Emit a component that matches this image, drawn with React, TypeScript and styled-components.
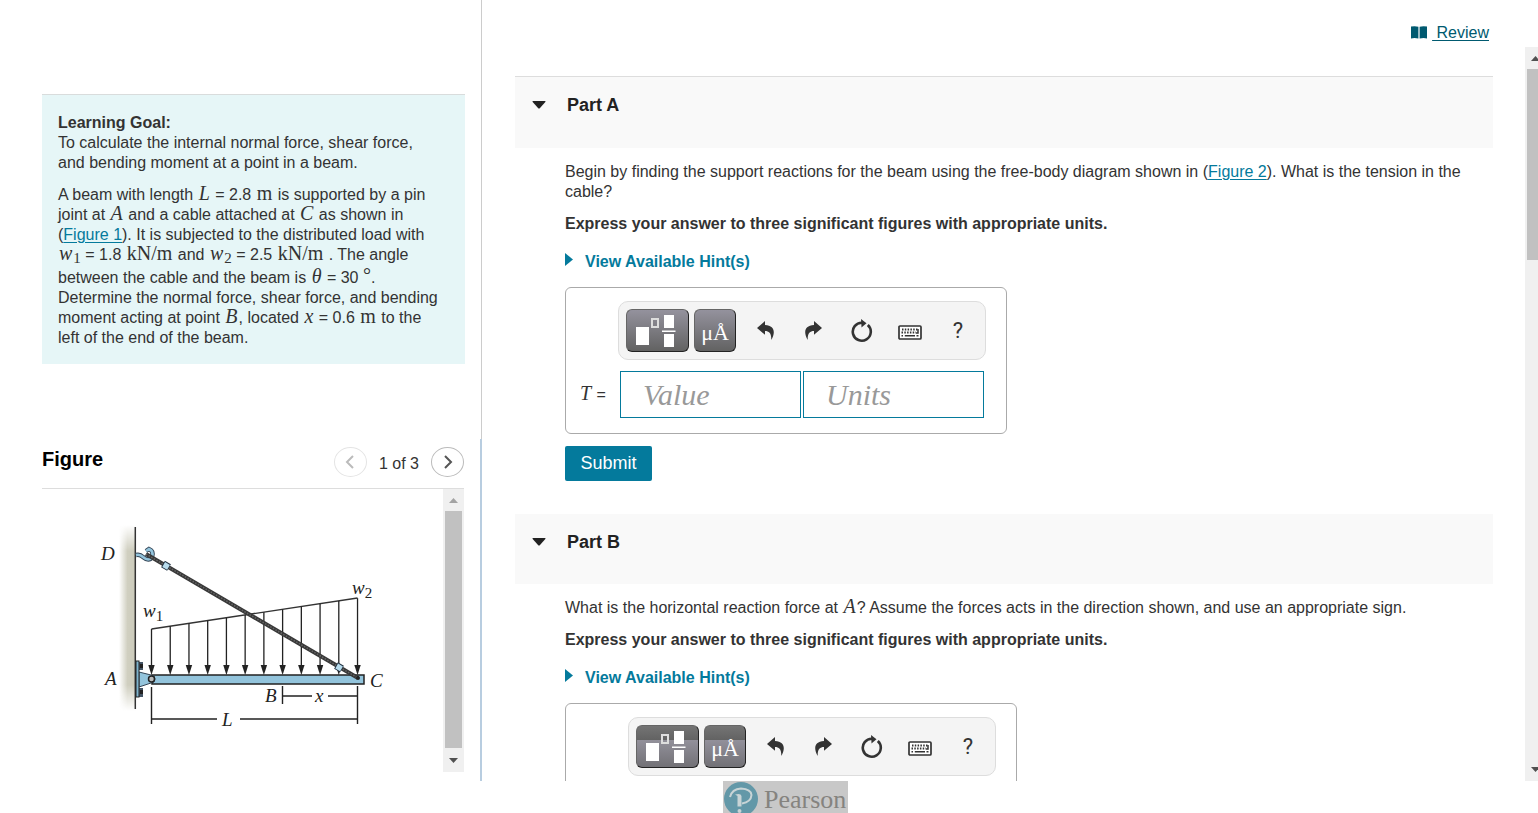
import React, { useId } from "react";
import styled, { createGlobalStyle } from "styled-components";

const GlobalStyle = createGlobalStyle`
  * { box-sizing: border-box; }
  body {
    margin: 0;
    background: #fff;
    color: #333;
    font-family: "Liberation Sans", Arial, sans-serif;
    font-size: 16px;
    line-height: 20px;
  }
  button, input { font-family: inherit; }
`;

const serif = '"Liberation Serif", "Times New Roman", serif';

const Page = styled.div`
  display: grid;
  grid-template-rows: minmax(0, 1fr) 32px;
  height: 100vh;
  overflow: hidden;
`;

const Panes = styled.div`
  display: grid;
  grid-template-columns: 482px minmax(0, 1fr);
  min-height: 0;
`;

const LeftPane = styled.aside`
  display: flex;
  flex-direction: column;
  min-height: 0;
`;

const GoalArea = styled.section`
  flex: none;
  padding: 94px 16px 75px 42px;
  border-right: 1px solid #ccc;
`;

const GoalCard = styled.div`
  padding: 18px 22px 16px 16px;
  border-top: 1px solid #d9dcdc;
  background: #e6f6f7;
  color: #333;
  font-size: 16px;
`;

const Para = styled.p`
  margin: 0 0 12px;
  &:last-child { margin-bottom: 0; }
`;

const Var = styled.i`
  padding: 0 1px;
  font-family: ${serif};
  font-size: 20px;
  line-height: 16px;
`;

const Unit = styled.span`
  padding: 0 1px;
  font-family: ${serif};
  font-size: 20px;
  line-height: 16px;
`;

const Degree = styled.span`
  font-family: ${serif};
  font-size: 20px;
  line-height: 20px;
  vertical-align: 1px;
`;

const Sub = styled.sub`
  font-family: ${serif};
  font-size: 15px;
  font-style: normal;
  line-height: 0;
  vertical-align: -3px;
`;

const TextLink = styled.a`
  color: #047a9c;
  text-decoration: underline;
  text-underline-offset: 2px;
`;

const FigureArea = styled.section`
  display: flex;
  flex: 1;
  flex-direction: column;
  min-height: 0;
  padding: 0 16px 9px 42px;
  border-right: 2px solid #b8cde0;
`;

const FigureHeader = styled.header`
  display: flex;
  flex: none;
  align-items: center;
  justify-content: space-between;
  height: 50px;
  padding-bottom: 4px;
  border-bottom: 1px solid #ddd;
`;

const FigureTitle = styled.h2`
  margin: 0;
  padding-bottom: 6px;
  color: #000;
  font-size: 20px;
`;

const Pager = styled.div`
  display: flex;
  align-items: center;
  gap: 12px;
  color: #333;
`;

const PageCount = styled.span`
  padding-top: 4px;
`;

const PagerButton = styled.button`
  display: grid;
  place-items: center;
  width: 33px;
  height: 30px;
  padding: 0;
  border: 1px solid #bbb;
  border-radius: 50%;
  background: #fff;
  color: #555;
  &:disabled { border-color: #e4e4e4; color: #bbb; }
`;

const FigureBody = styled.div`
  display: flex;
  flex: 1;
  justify-content: space-between;
  min-height: 0;
`;

const Thumb = styled.div<{ $size: string }>`
  align-self: stretch;
  flex: ${(p) => p.$size};
  margin: 0 2px;
  background: #c1c1c1;
`;

const Track = styled.div<{ $clipped?: boolean }>`
  display: flex;
  flex: none;
  flex-direction: column;
  align-items: flex-start;
  width: ${(p) => (p.$clipped ? 13 : 21)}px;
  overflow: hidden;
  background: #f0f0f0;
  ${Thumb} { margin-right: ${(p) => (p.$clipped ? 0 : 2)}px; }
`;

const ArrowCell = styled.div<{ $end?: boolean }>`
  display: grid;
  flex: none;
  place-items: center;
  width: 21px;
  height: ${(p) => (p.$end ? 24 : 22)}px;
  margin-top: ${(p) => (p.$end ? "auto" : "0")};
`;

const RightPane = styled.main`
  display: flex;
  flex-direction: column;
  min-width: 0;
  min-height: 0;
`;

const TopBar = styled.nav`
  display: flex;
  flex: none;
  align-items: center;
  justify-content: flex-end;
  height: 47px;
  padding: 18px 49px 0 0;
`;

const ReviewLink = styled.a`
  display: flex;
  align-items: center;
  gap: 5px;
  color: #005a70;
  text-decoration: none;
  span { text-decoration: underline; text-underline-offset: 2px; white-space: pre; }
`;

const ScrollArea = styled.div`
  display: flex;
  flex: 1;
  min-height: 0;
`;

const Content = styled.div`
  flex: 1;
  min-width: 0;
  overflow: hidden;
  padding: 29px 32px 0 33px;
`;

const Part = styled.section`
  margin-bottom: 33px;
`;

const PartHeader = styled.h2<{ $first?: boolean }>`
  height: ${(p) => (p.$first ? 72 : 70)}px;
  margin: 0;
  border-top: ${(p) => (p.$first ? "1px solid #ddd" : "0")};
  background: #f9f9f9;
`;

const PartToggle = styled.button`
  display: flex;
  align-items: center;
  gap: 21px;
  padding: 18px 17px;
  border: 0;
  background: none;
  color: #222;
  font-size: 18px;
  font-weight: bold;
  line-height: 20px;
`;

const PartBody = styled.div`
  padding: 14px 0 0 50px;
  color: #333;
`;

const Instruction = styled.p`
  margin: 0 0 18px;
  font-weight: bold;
`;

const HintButton = styled.button`
  display: flex;
  align-items: center;
  gap: 12px;
  margin: 0 0 15px;
  padding: 0;
  border: 0;
  background: none;
  color: #047a9c;
  font-size: 16px;
  font-weight: bold;
  line-height: 20px;
  svg { margin-bottom: 5px; }
`;

const AnswerBox = styled.form<{ $wide?: boolean }>`
  width: ${(p) => (p.$wide ? 452 : 442)}px;
  padding: 13px 20px 15px 13px;
  border: 1px solid #aaa;
  border-radius: 6px;
`;

const Toolbar = styled.div`
  display: flex;
  align-items: center;
  width: 368px;
  height: 59px;
  margin-left: auto;
  padding: 0 3px 0 7px;
  border: 1px solid #ddd;
  border-radius: 10px;
  background: #f4f4f4;
`;

const ToolKey = styled.button<{ $split?: boolean; $width: number }>`
  display: grid;
  flex: none;
  place-items: center;
  width: ${(p) => p.$width}px;
  height: 43px;
  margin-right: 5px;
  padding: 0;
  border: 1px solid #222;
  border-top-color: #666;
  border-left-color: #666;
  border-radius: 6px;
  background: ${(p) =>
    p.$split
      ? "linear-gradient(#747474, #626262 35%, #92909a 35%, #727176)"
      : "linear-gradient(#94929d, #626262)"};
  color: #fff;
  font-family: ${serif};
  font-size: 22px;
  line-height: 24px;
  span { padding-top: 4px; }
`;

const ToolButton = styled.button`
  display: grid;
  flex: 1;
  place-items: center;
  height: 43px;
  padding: 0;
  border: 0;
  background: none;
  color: #333;
  font-family: Roboto, "Liberation Sans", sans-serif;
  font-size: 22px;
`;

const AnswerRow = styled.div`
  display: flex;
  align-items: center;
  gap: 2px;
  margin-top: 11px;
  padding-right: 2px;
`;

const AnswerLabel = styled.label`
  flex: 1;
`;

const AnswerInput = styled.input`
  width: 181px;
  height: 47px;
  padding: 0 22px;
  border: 1px solid #047a9c;
  background: #fff;
  font-family: ${serif};
  font-size: 30px;
  font-style: italic;
  &::placeholder { color: #999; opacity: 1; }
`;

const SubmitButton = styled.button`
  width: 87px;
  height: 35px;
  margin-top: 12px;
  padding: 0;
  border: 0;
  border-radius: 2px;
  background: #047a9c;
  color: #fff;
  font-size: 18px;
`;

const Footer = styled.footer`
  display: flex;
  justify-content: center;
  padding-left: 33px;
  overflow: hidden;
`;

const Brand = styled.div`
  display: flex;
  gap: 6px;
  width: 125px;
  height: 36px;
  background: #c8c8c8;
  color: #85837f;
  font-family: ${serif};
  font-size: 26px;
  line-height: 38px;
  svg { flex: none; }
`;

const Triangle = ({ up, color }: { up?: boolean; color: string }) => (
  <svg width="9" height="5" viewBox="0 0 9 5">
    <path d={up ? "M0 5 4.500 0 9 5Z" : "M0 0H9L4.500 5Z"} fill={color} />
  </svg>
);

const TemplateIcon = () => (
  <svg width="43" height="34" viewBox="0 0 43 34">
    <path d="M0 13H13V31H0ZM28 1H38V14H28ZM28 20H38V33H28ZM26 16.500H39.500V18H26Z" fill="#fff" />
    <rect x="16" y="5" width="6" height="8" fill="none" stroke="#ddd" strokeWidth="2" />
  </svg>
);

const UndoIcon = ({ flip }: { flip?: boolean }) => (
  <svg width="18" height="20" viewBox="0 0 18 20">
    <path
      d="M9 0 1 7 9 13.800V10C13 10 15.500 12 15.300 19 19.500 12 19 4.500 9 4Z"
      fill="#333"
      transform={flip ? "matrix(-1 0 0 1 19 0)" : undefined}
    />
  </svg>
);

const ResetIcon = () => (
  <svg width="22" height="24" viewBox="0 0 22 24">
    <path d="M16.800 6A9 9 0 1 1 11 3.700" fill="none" stroke="#333" strokeWidth="2.600" />
    <path d="M10 0 15.500 4.200 10.500 8.500Z" fill="#333" />
  </svg>
);

const KeyboardIcon = () => (
  <svg width="24" height="19" viewBox="0 -4 24 19">
    <rect x="1" y="1" width="22" height="13" rx="1" fill="#fff" stroke="#333" strokeWidth="1.700" />
    <path d="M4 4.500H20M3.500 7.500H18" stroke="#333" strokeWidth="1.800" strokeDasharray="1.500 1.300" />
    <path d="M3.500 10.800H5M6.800 10.800H17M18.500 10.800H20.500M20 4V8H18" fill="none" stroke="#333" strokeWidth="1.500" />
  </svg>
);

const Chevron = ({ left }: { left?: boolean }) => (
  <svg width="10" height="14" viewBox="0 0 10 14">
    <path d={left ? "M8 1 2 7 8 13" : "M2 1 8 7 2 13"} fill="none" stroke="currentColor" strokeWidth="2" />
  </svg>
);

const BookIcon = () => (
  <svg width="16" height="13" viewBox="0 0 16 13">
    <path d="M0 .6Q4 -.4 7.400 .8V12.600Q4 11.600 0 12.400ZM8.600 .8Q12 -.4 16 .6V12.400Q12 11.600 8.600 12.600Z" fill="#005a70" />
  </svg>
);

const FigureSvg = styled.svg`
  flex: none;
  font-family: ${serif};
  font-size: 19px;
  font-style: italic;
`;

const arrows = Array.from({ length: 12 }, (_, i) => ({
  x: 151.5 + i * 18.73,
  top: 628 - i * 2.8,
}));

const BeamFigure = () => (
  <FigureSvg width="400" height="283" viewBox="42 488 400 283" role="img" aria-label="Cable-supported beam">
    <defs>
      <linearGradient id="wall">
        <stop offset="0" stopColor="#d0cfc0" stopOpacity="0" />
        <stop offset=".5" stopColor="#d0cfc0" />
        <stop offset="1" stopColor="#cccbbb" />
      </linearGradient>
      <linearGradient id="fade" x2="0" y2="1">
        <stop offset="0" stopColor="#000" />
        <stop offset=".14" stopColor="#fff" />
        <stop offset=".86" stopColor="#fff" />
        <stop offset="1" stopColor="#000" />
      </linearGradient>
      <mask id="wallMask">
        <rect x="119" y="524" width="17" height="186" fill="url(#fade)" />
      </mask>
    </defs>
    <rect x="119" y="524" width="17" height="186" fill="url(#wall)" mask="url(#wallMask)" />
    <path d="M135.300 526V708" stroke="#333" strokeWidth="1.500" />

    <path d="M151.500 628 357.500 597" stroke="#333" strokeWidth="1.300" />
    {arrows.map((a) => (
      <g key={a.x}>
        <path d={`M${a.x} ${a.top}V668`} stroke="#222" strokeWidth="1.300" />
        <path d={`M${a.x - 3.2} 664H${a.x + 3.2}L${a.x} 674Z`} fill="#222" />
      </g>
    ))}

    <rect x="152" y="674" width="212" height="9" fill="#93c4dc" stroke="#222" strokeWidth="1.500" />
    <path d="M139 671 151 674A4 4 0 0 1 151 682L139 686Z" fill="#93c4dc" stroke="#345" />
    <path d="M139 661H143V669H139ZM139 687H143V696H139Z" fill="#456" />
    <path d="M140 665H143M140 691H143" stroke="#222" strokeWidth="4" />
    <rect x="136" y="660" width="3" height="36" fill="#7fb4ce" stroke="#222" />
    <circle cx="151.500" cy="678" r="3" fill="#bbb" stroke="#222" strokeWidth="1.500" />

    <path d="M136 554Q140 553 143 556Q149 561 152 556Q154 550 149 548L146 550" fill="none" stroke="#345" strokeWidth="4.500" />
    <path d="M136 554Q140 553 143 556Q149 561 152 556Q154 550 149 548L146 550" fill="none" stroke="#93c4dc" strokeWidth="2.700" />
    <path d="M146 553 358 677" stroke="#383838" strokeWidth="4" />
    <path d="M146 553 358 677" stroke="#666" strokeWidth="1.500" strokeDasharray="1.500 1.500" />
    <path d="M163 563 169 566.500M336 664.500 342 668" stroke="#234" strokeWidth="7.500" />
    <path d="M163.700 563.500 168.500 566.300M336.700 665 341.500 667.800" stroke="#b8dced" strokeWidth="5.500" />
    <circle cx="358" cy="677" r="2" fill="#222" />

    <path
      d="M151.500 686V723M357.500 685V723M282.500 685V703M151.500 718H217M240 718H357.500M282.500 695H312M328 695H357.500"
      stroke="#222"
      strokeWidth="1.400"
    />
    <g fill="#222">
      <text x="101" y="559">D</text>
      <text x="105" y="684">A</text>
      <text x="370" y="686">C</text>
      <text x="265" y="701">B</text>
      <text x="315" y="701">x</text>
      <text x="222" y="725">L</text>
      <text x="143" y="616">w<tspan dy="4" fontStyle="normal" fontSize="15">1</tspan></text>
      <text x="352" y="593">w<tspan dy="4" fontStyle="normal" fontSize="15">2</tspan></text>
    </g>
  </FigureSvg>
);

const AnswerToolbar = ({ split }: { split?: boolean }) => (
  <Toolbar role="toolbar">
    <ToolKey type="button" $width={63} $split={split} aria-label="Templates">
      <TemplateIcon />
    </ToolKey>
    <ToolKey type="button" $width={42} $split={split}><span>μÅ</span></ToolKey>
    <ToolButton type="button" aria-label="Undo"><UndoIcon /></ToolButton>
    <ToolButton type="button" aria-label="Redo"><UndoIcon flip /></ToolButton>
    <ToolButton type="button" aria-label="Reset"><ResetIcon /></ToolButton>
    <ToolButton type="button" aria-label="Keyboard shortcuts"><KeyboardIcon /></ToolButton>
    <ToolButton type="button">?</ToolButton>
  </Toolbar>
);

const Header = ({ title, first }: { title: string; first?: boolean }) => (
  <PartHeader $first={first}>
    <PartToggle type="button" aria-expanded="true">
      <svg width="14" height="8" viewBox="0 0 14 8"><path d="M1 0H13Q14 0 13.300 1L8 7Q7 8 6 7L.7 1Q0 0 1 0Z" fill="#222" /></svg>
      {title}
    </PartToggle>
  </PartHeader>
);

const Hints = () => (
  <HintButton type="button">
    <svg width="8" height="13" viewBox="0 0 8 13"><path d="M0 0 8 6.500 0 13Z" fill="#047a9c" /></svg>
    View Available Hint(s)
  </HintButton>
);

export default function App() {
  const valueId = useId();
  return (
    <>
      <GlobalStyle />
      <Page>
        <Panes>
          <LeftPane>
            <GoalArea>
              <GoalCard>
                <Para>
                  <b>Learning Goal:</b>
                  <br />
                  To calculate the internal normal force, shear force, and bending moment at a point in a beam.
                </Para>
                <Para>
                  A beam with length <Var>L</Var> = 2.8 <Unit>m</Unit> is supported by a pin joint at <Var>A</Var> and a
                  cable attached at <Var>C</Var> as shown in (<TextLink href="#figure1">Figure 1</TextLink>). It is
                  subjected to the distributed load with <Var>w</Var><Sub>1</Sub> = 1.8 <Unit>kN/m</Unit> and{" "}
                  <Var>w</Var><Sub>2</Sub> = 2.5 <Unit>kN/m</Unit> . The angle between the cable and the beam is{" "}
                  <Var>θ</Var> = 30 <Degree>°</Degree>. Determine the normal force, shear force, and bending moment
                  acting at point <Var>B</Var>, located <Var>x</Var> = 0.6 <Unit>m</Unit> to the left of the end of the
                  beam.
                </Para>
              </GoalCard>
            </GoalArea>
            <FigureArea>
              <FigureHeader>
                <FigureTitle>Figure</FigureTitle>
                <Pager>
                  <PagerButton type="button" disabled aria-label="Previous figure"><Chevron left /></PagerButton>
                  <PageCount>1 of 3</PageCount>
                  <PagerButton type="button" aria-label="Next figure"><Chevron /></PagerButton>
                </Pager>
              </FigureHeader>
              <FigureBody>
                <BeamFigure />
                <Track>
                  <ArrowCell><Triangle up color="#a3a3a3" /></ArrowCell>
                  <Thumb $size="1" />
                  <ArrowCell $end><Triangle color="#505050" /></ArrowCell>
                </Track>
              </FigureBody>
            </FigureArea>
          </LeftPane>

          <RightPane>
            <TopBar>
              <ReviewLink href="#review"><BookIcon /><span>{" Review"}</span></ReviewLink>
            </TopBar>
            <ScrollArea>
              <Content>
                <Part>
                  <Header title="Part A" first />
                  <PartBody>
                    <Para>
                      Begin by finding the support reactions for the beam using the free-body diagram shown in (
                      <TextLink href="#figure2">Figure 2</TextLink>). What is the tension in the cable?
                    </Para>
                    <Instruction>Express your answer to three significant figures with appropriate units.</Instruction>
                    <Hints />
                    <AnswerBox>
                      <AnswerToolbar />
                      <AnswerRow>
                        <AnswerLabel htmlFor={valueId}><Var>T</Var> =</AnswerLabel>
                        <AnswerInput id={valueId} placeholder="Value" />
                        <AnswerInput aria-label="Units" placeholder="Units" />
                      </AnswerRow>
                    </AnswerBox>
                    <SubmitButton type="button">Submit</SubmitButton>
                  </PartBody>
                </Part>
                <Part>
                  <Header title="Part B" />
                  <PartBody>
                    <Para>
                      What is the horizontal reaction force at <Var>A</Var>? Assume the forces acts in the direction
                      shown, and use an appropriate sign.
                    </Para>
                    <Instruction>Express your answer to three significant figures with appropriate units.</Instruction>
                    <Hints />
                    <AnswerBox $wide>
                      <AnswerToolbar split />
                    </AnswerBox>
                  </PartBody>
                </Part>
              </Content>
              <Track $clipped>
                <ArrowCell><Triangle up color="#505050" /></ArrowCell>
                <Thumb $size="0 0 26%" />
                <ArrowCell $end><Triangle color="#505050" /></ArrowCell>
              </Track>
            </ScrollArea>
          </RightPane>
        </Panes>
        <Footer>
          <Brand>
            <svg width="35" height="36" viewBox="0 0 35 36">
              <circle cx="18" cy="18" r="17" fill="#6398a8" />
              <path d="M7 16Q9 8 18 7.500Q28 8 28.500 14Q28 21 19 22.500" fill="none" stroke="#c8d4d6" strokeWidth="2" />
              <path d="M12 13.500Q18 12 18.500 15V25.500H14.500V15Z" fill="#c8d4d6" />
              <circle cx="16.500" cy="30" r="2" fill="#c8d4d6" />
            </svg>
            Pearson
          </Brand>
        </Footer>
      </Page>
    </>
  );
}
